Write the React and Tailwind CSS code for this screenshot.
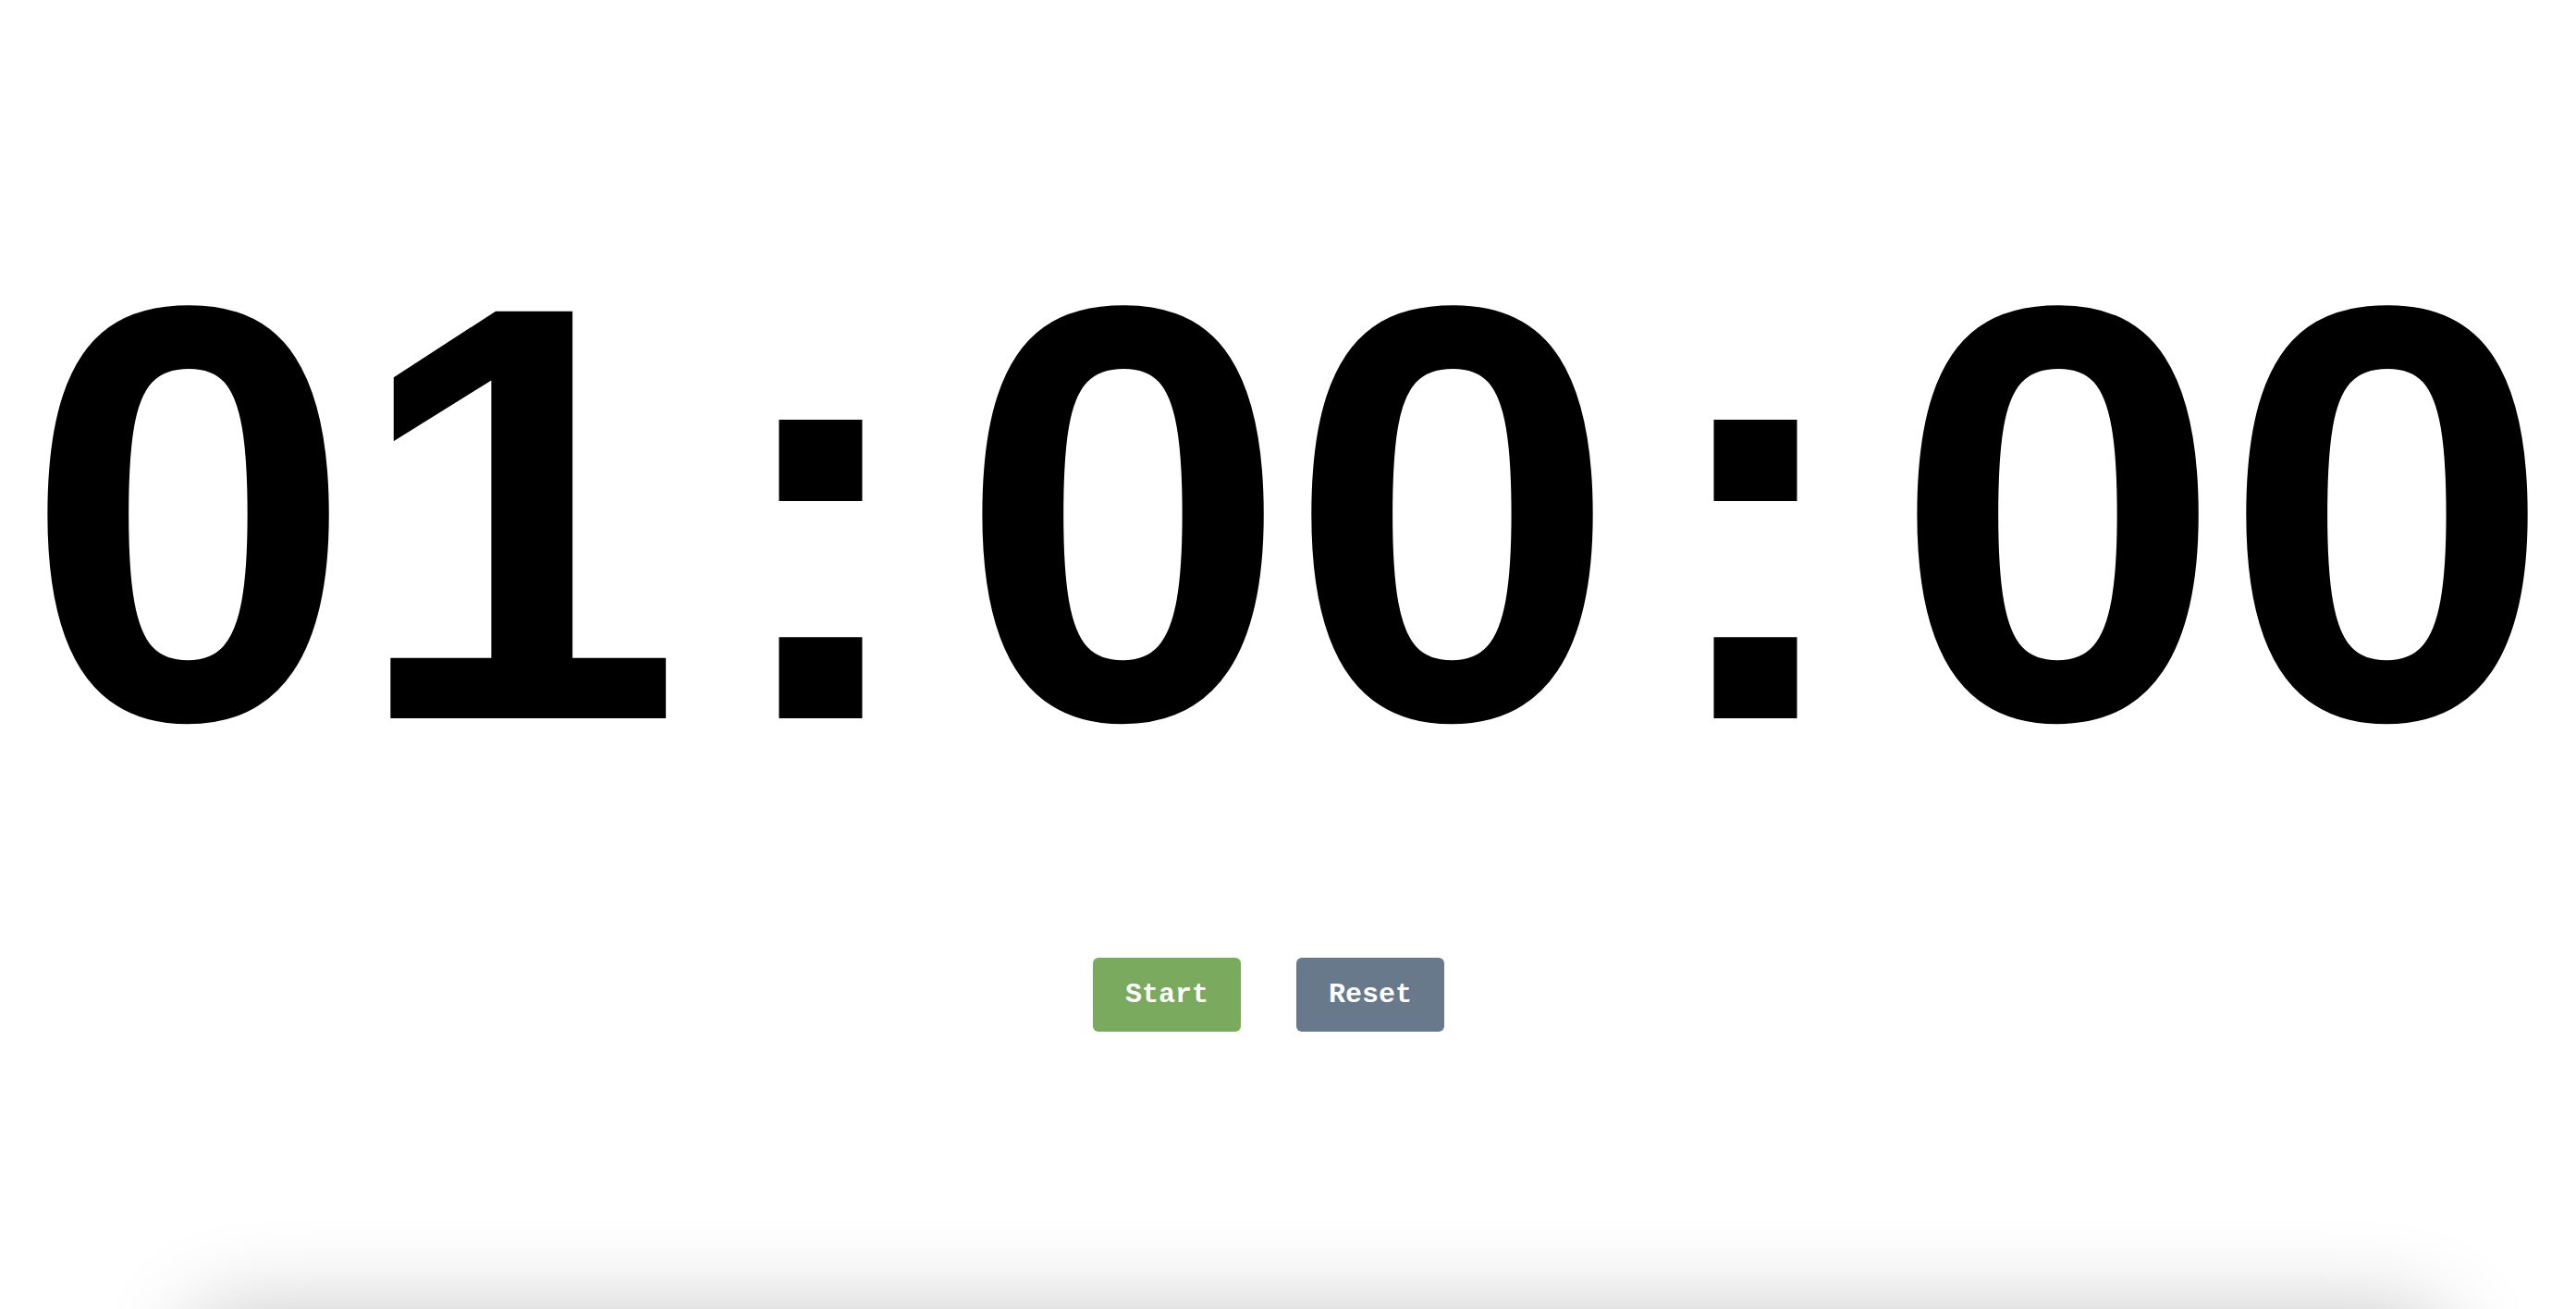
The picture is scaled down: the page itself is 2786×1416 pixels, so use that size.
import { useEffect, useState } from "react";

const ONE_HOUR = 60 * 60;

function pad(n) {
  return String(n).padStart(2, "0");
}

export default function App() {
  const [secondsLeft, setSecondsLeft] = useState(ONE_HOUR);
  const [running, setRunning] = useState(false);

  // tick once a second while running
  useEffect(() => {
    if (!running) return;
    const id = setInterval(() => {
      setSecondsLeft((s) => {
        if (s <= 1) {
          setRunning(false);
          return 0;
        }
        return s - 1;
      });
    }, 1000);
    return () => clearInterval(id);
  }, [running]);

  const hours = pad(Math.floor(secondsLeft / 3600));
  const minutes = pad(Math.floor((secondsLeft % 3600) / 60));
  const seconds = pad(secondsLeft % 60);

  const reset = () => {
    setRunning(false);
    setSecondsLeft(ONE_HOUR);
  };

  return (
    <div className="h-screen overflow-hidden flex flex-col bg-white">
      <main className="flex-1 flex flex-col items-center pt-[236px]">
        {/* Clock */}
        <div className="flex justify-center gap-[43px] [font-family:Liberation_Sans,Arial,sans-serif] font-bold text-[640px] leading-none text-black whitespace-nowrap">
          <span>{hours}</span>
          <span>:</span>
          <span>{minutes}</span>
          <span>:</span>
          <span>{seconds}</span>
        </div>

        {/* Controls */}
        <div className="mt-[160px] flex justify-center gap-[60px] pr-[42px] [font-family:Liberation_Mono,Courier_New,monospace] font-bold text-[30px] text-white">
          <button
            onClick={() => setRunning((r) => !r)}
            className="w-[160px] h-[80px] rounded-[6px] bg-[#79aa5d] flex items-center justify-center"
          >
            {running ? "Pause" : "Start"}
          </button>
          <button
            onClick={reset}
            className="w-[160px] h-[80px] rounded-[6px] bg-[#69798c] flex items-center justify-center"
          >
            Reset
          </button>
        </div>
      </main>

      {/* panel sitting just under the fold, only its shadow shows */}
      <div className="shrink-0 h-[200px] mt-[5px] -mb-[205px] ml-[207px] mr-[142px] rounded-[40px] bg-white shadow-[0_0_100px_rgba(0,0,0,0.24)]" />
    </div>
  );
}
